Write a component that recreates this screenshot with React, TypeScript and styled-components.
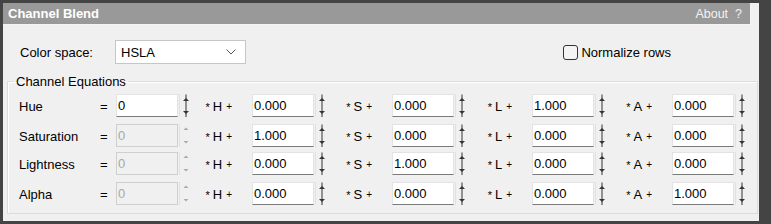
import React, { FC } from "react";
import styled, { createGlobalStyle } from "styled-components";

const GlobalStyle = createGlobalStyle`
  html, body {
    margin: 0;
    padding: 0;
    background: #444444;
  }
  body {
    font-family: "Liberation Sans", Arial, sans-serif;
    font-size: 13px;
    color: #000;
  }
`;

const channels = ["H", "S", "L", "A"];

const rows = [
  { name: "Hue", base: "0", enabled: true, values: ["0.000", "0.000", "1.000", "0.000"] },
  { name: "Saturation", base: "0", enabled: false, values: ["1.000", "0.000", "0.000", "0.000"] },
  { name: "Lightness", base: "0", enabled: false, values: ["0.000", "1.000", "0.000", "0.000"] },
  { name: "Alpha", base: "0", enabled: false, values: ["0.000", "0.000", "0.000", "1.000"] },
];

interface EnabledProps {
  $enabled: boolean;
}

const Spinner: FC<{ enabled: boolean }> = ({ enabled }) => (
  <SpinWrap>
    {enabled ? (
      <svg width="8" height="23" viewBox="0 0 8 23">
        <line x1="4" y1="0.5" x2="4" y2="23" stroke="#333" strokeWidth="1" />
        <polygon points="1,7 7,7 4,4" fill="#333" />
        <polygon points="1,17 7,17 4,20" fill="#333" />
      </svg>
    ) : (
      <svg width="8" height="23" viewBox="0 0 8 23">
        <polygon points="1.5,6 6.5,6 4,3.5" fill="#aaa" />
        <polygon points="1.5,17 6.5,17 4,19.5" fill="#aaa" />
      </svg>
    )}
  </SpinWrap>
);

const App: FC = () => {
  return (
    <>
      <GlobalStyle />
      <Screen>
        <Panel>
          <TitleBar>
            <Title>Channel Blend</Title>
            <About>About&nbsp;&nbsp;?</About>
          </TitleBar>
          <TopRow>
            <FieldLabel>Color space:</FieldLabel>
            <Select>
              <span>HSLA</span>
              <svg width="10" height="6" viewBox="0 0 10 6">
                <polyline points="0.5,0.5 5,5 9.5,0.5" fill="none" stroke="#555" strokeWidth="1" />
              </svg>
            </Select>
            <CheckLabel>
              <CheckBox />
              Normalize rows
            </CheckLabel>
          </TopRow>
          <Group>
            <Legend>Channel Equations</Legend>
            <Grid>
              {rows.map((row) => (
                <React.Fragment key={row.name}>
                  <RowName>{row.name}</RowName>
                  <Equals>=</Equals>
                  <NumInput $enabled={row.enabled} defaultValue={row.base} disabled={!row.enabled} />
                  <Spinner enabled={row.enabled} />
                  {row.values.map((v, i) => (
                    <React.Fragment key={i}>
                      <Term>
                        <Star>*</Star>
                        <span>{channels[i]}</span>
                        <Plus>+</Plus>
                      </Term>
                      <NumInput $enabled defaultValue={v} />
                      <Spinner enabled />
                    </React.Fragment>
                  ))}
                </React.Fragment>
              ))}
            </Grid>
          </Group>
        </Panel>
      </Screen>
    </>
  );
};

const Screen = styled.div`
  width: 771px;
  height: 224px;
  box-sizing: border-box;
  padding: 3px 0 0 3px;
`;

const Panel = styled.div`
  width: 756px;
  height: 218px;
  background: #f0f0f0;
  display: flex;
  flex-direction: column;
`;

const TitleBar = styled.div`
  height: 21px;
  margin-right: 8px;
  background: #999999;
  border-right: 1px solid #f4f4f4;
  border-bottom: 1px solid #f4f4f4;
  display: flex;
  align-items: center;
  justify-content: space-between;
  padding: 0 8px 0 5px;
`;

const Title = styled.span`
  color: #fff;
  font-weight: 700;
  font-size: 13px;
`;

const About = styled.span`
  color: #f2f2f2;
  font-size: 12.5px;
`;

const TopRow = styled.div`
  display: flex;
  align-items: center;
  margin-top: 15px;
  padding: 0 88px 0 17px;
  height: 24px;
`;

const FieldLabel = styled.span`
  width: 95px;
`;

const Select = styled.div`
  box-sizing: border-box;
  width: 131px;
  height: 24px;
  background: #fff;
  border: 1px solid #c6c6c6;
  display: flex;
  align-items: center;
  justify-content: space-between;
  padding: 0 9px 0 5px;
`;

const CheckLabel = styled.label`
  margin-left: auto;
  display: flex;
  align-items: center;
  gap: 3px;
`;

const CheckBox = styled.span`
  box-sizing: border-box;
  width: 15px;
  height: 15px;
  border: 1px solid #333;
  border-radius: 3px;
  background: #f4f4f4;
`;

const Group = styled.fieldset`
  margin: 10px 1px 0 4px;
  padding: 0 0 8px 0;
  border: 1px solid #dcdcdc;
  box-shadow: inset 1px 1px 0 #fff;
  min-width: 0;
`;

const Legend = styled.legend`
  margin-left: 6px;
  padding: 0 2px;
  line-height: 15px;
  font-size: 13px;
`;

const Grid = styled.div`
  display: grid;
  grid-template-columns:
    81px 16px 62px 14px
    60px 62px 14px
    64px 62px 14px
    64px 62px 14px
    64px 62px 14px;
  grid-template-rows: 30px 28px 30px 23px;
  padding: 5px 0 0 11px;
  align-items: start;
`;

const Cell = styled.span`
  height: 23px;
  display: flex;
  align-items: center;
`;

const RowName = styled(Cell)`
  padding-top: 2px;
  box-sizing: border-box;
`;

const Equals = styled(Cell)`
  padding-top: 2px;
  box-sizing: border-box;
`;

const NumInput = styled.input<EnabledProps>`
  box-sizing: border-box;
  width: 62px;
  height: 23px;
  margin: 0;
  padding: 0 1px;
  font-family: "Liberation Sans", Arial, sans-serif;
  font-size: 13px;
  outline: none;
  border: 1px solid ${(p) => (p.$enabled ? "#e3e3e3" : "#cfcfcf")};
  border-bottom-color: ${(p) => (p.$enabled ? "#7a7a7a" : "#cfcfcf")};
  background: ${(p) => (p.$enabled ? "#fff" : "#f0f0f0")};
  color: ${(p) => (p.$enabled ? "#000" : "#a8a8a8")};
`;

const SpinWrap = styled.div`
  height: 23px;
  display: flex;
  align-items: center;
  border-left: 1px solid #e2e2e2;
  margin-left: 1px;
  padding-left: 2px;
`;

const Term = styled(Cell)`
  justify-content: flex-end;
  padding-right: 20px;
  padding-top: 2px;
  box-sizing: border-box;
  white-space: nowrap;
`;

const Star = styled.span`
  font-size: 11px;
  margin-right: 3px;
`;

const Plus = styled.span`
  font-size: 10px;
  margin-left: 4px;
`;

export default App;
